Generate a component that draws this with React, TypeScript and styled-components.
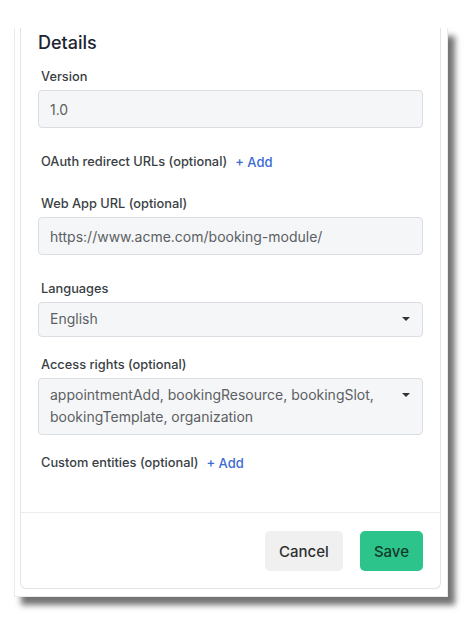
import styled, { createGlobalStyle } from 'styled-components';

const GlobalStyle = createGlobalStyle`
    * {
        box-sizing: border-box;
    }
    body {
        margin: 0;
        background: #ffffff;
        font-family: Inter, "Noto Sans", "Liberation Sans", sans-serif;
    }
`;

const Page = styled.div`
    padding: 28px 0 0 14px;
    width: 474px;
    height: 619px;
    overflow: hidden;
`;

const Frame = styled.div`
    width: 434px;
    height: 569px;
    padding: 0 6px 7px 5px;
    background: #ffffff;
    border: 1px solid #ebebeb;
    border-top: none;
    box-shadow: 7px 8px 6px rgba(0, 0, 0, 0.55);
`;

const Modal = styled.div`
    width: 421px;
    height: 100%;
    display: flex;
    flex-direction: column;
    background: #ffffff;
    border: 1px solid #e4e4e4;
    border-top: none;
    border-radius: 0 0 6px 6px;
`;

const Body = styled.div`
    flex: 1;
    padding: 3px 17px 0 17px;
`;

const Heading = styled.h2`
    margin: 0;
    font-size: 18px;
    line-height: 24px;
    font-weight: 500;
    color: #1b2430;
`;

interface FieldProps {
    $top: number;
}

const Field = styled.div<FieldProps>`
    margin-top: ${props => props.$top}px;
`;

const LabelRow = styled.div`
    display: flex;
    align-items: center;
    gap: 8px;
    padding-left: 3px;
    height: 18px;
`;

const Label = styled.span`
    font-size: 12.8px;
    line-height: 18px;
    font-weight: 500;
    color: #3a3f45;
`;

const AddLink = styled.a`
    font-size: 13px;
    line-height: 18px;
    font-weight: 500;
    color: #3b6bd3;
    text-decoration: none;
    cursor: pointer;
`;

interface BoxProps {
    $height: number;
}

const Input = styled.div<BoxProps>`
    margin-top: 4px;
    height: ${props => props.$height}px;
    display: flex;
    align-items: center;
    padding: 0 11px;
    background: #f5f6f8;
    border: 1px solid #dadde1;
    border-radius: 4px;
    font-size: 14px;
    color: #5c5f63;
`;

const Select = styled.div<BoxProps>`
    margin-top: 4px;
    min-height: ${props => props.$height}px;
    display: flex;
    align-items: flex-start;
    justify-content: space-between;
    padding: 5px 12px 5px 11px;
    background: #f5f6f8;
    border: 1px solid #dadde1;
    border-radius: 4px;
    font-size: 14px;
    line-height: 22px;
    color: #5c5f63;
`;

const SelectValue = styled.span`
    max-width: 340px;
`;

const Caret = styled.span`
    margin-top: 9px;
    width: 0;
    height: 0;
    border-left: 4px solid transparent;
    border-right: 4px solid transparent;
    border-top: 4px solid #333333;
    flex-shrink: 0;
`;

const Footer = styled.div`
    display: flex;
    justify-content: flex-end;
    gap: 17px;
    padding: 18px 17px 17px 17px;
    border-top: 1px solid #ececec;
`;

interface ButtonProps {
    $primary?: boolean;
}

const Button = styled.button<ButtonProps>`
    height: 40px;
    padding: 0 14px;
    border: none;
    border-radius: 5px;
    font-family: inherit;
    font-size: 15px;
    font-weight: 500;
    background: ${props => props.$primary ? '#2cc48b' : '#f0f0f0'};
    color: ${props => props.$primary ? '#123a2a' : '#2d2f31'};
    cursor: pointer;
`;

export default function App() {
    return (
        <>
            <GlobalStyle />
            <Page>
                <Frame>
                    <Modal>
                        <Body>
                            <Heading>Details</Heading>
                            <Field $top={13}>
                                <LabelRow><Label>Version</Label></LabelRow>
                                <Input $height={38}>1.0</Input>
                            </Field>
                            <Field $top={25}>
                                <LabelRow>
                                    <Label>OAuth redirect URLs (optional)</Label>
                                    <AddLink>+ Add</AddLink>
                                </LabelRow>
                            </Field>
                            <Field $top={24}>
                                <LabelRow><Label>Web App URL (optional)</Label></LabelRow>
                                <Input $height={38}>https://www.acme.com/booking-module/</Input>
                            </Field>
                            <Field $top={25}>
                                <LabelRow><Label>Languages</Label></LabelRow>
                                <Select $height={35}>
                                    <SelectValue>English</SelectValue>
                                    <Caret />
                                </Select>
                            </Field>
                            <Field $top={19}>
                                <LabelRow><Label>Access rights (optional)</Label></LabelRow>
                                <Select $height={57}>
                                    <SelectValue>appointmentAdd, bookingResource, bookingSlot, bookingTemplate, organization</SelectValue>
                                    <Caret />
                                </Select>
                            </Field>
                            <Field $top={19}>
                                <LabelRow>
                                    <Label>Custom entities (optional)</Label>
                                    <AddLink>+ Add</AddLink>
                                </LabelRow>
                            </Field>
                        </Body>
                        <Footer>
                            <Button>Cancel</Button>
                            <Button $primary>Save</Button>
                        </Footer>
                    </Modal>
                </Frame>
            </Page>
        </>
    );
}
